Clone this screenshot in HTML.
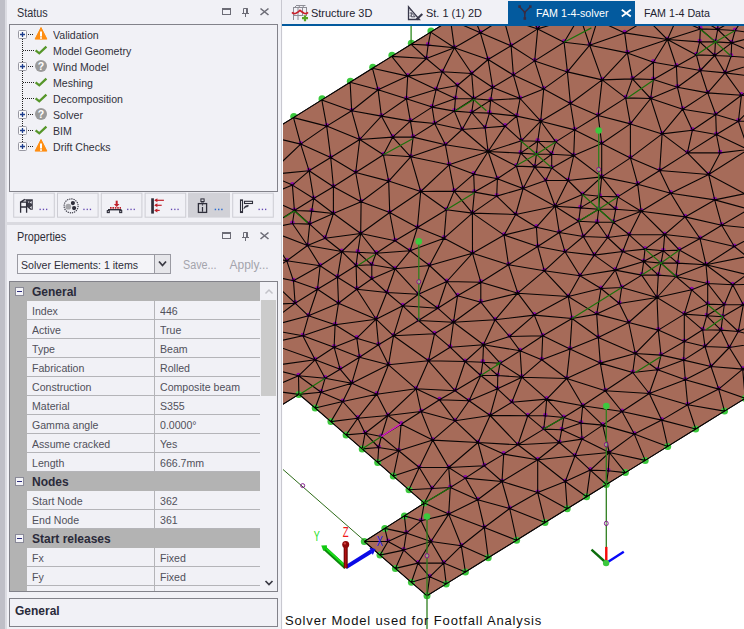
<!DOCTYPE html>
<html><head><meta charset="utf-8"><title>FAM 1-4-solver</title>
<style>
*{box-sizing:border-box;margin:0;padding:0}
html,body{width:744px;height:629px;overflow:hidden;background:#f1f1f6;font-family:"Liberation Sans",sans-serif;font-size:12px;color:#32323c}
.abs{position:absolute}
.t{display:inline-block;transform:scaleX(.92);transform-origin:0 50%;white-space:nowrap}
#strip{left:0;top:0;width:5px;height:629px;background:#bfbfc7}
#strip2{left:5px;top:0;width:2px;height:629px;background:#dcdce2}
.title{left:17px;font-size:12px;color:#2e2e38;line-height:14px;transform:scaleX(.9);transform-origin:0 50%;margin-top:.5px}
.box{border:1px solid #82828a;background:#f1f1f6}
.tree div{position:absolute;left:53px;height:16px;line-height:16px;font-size:11.5px;color:#32323c;white-space:nowrap;transform:scaleX(.92);transform-origin:0 50%;margin-top:1px}
.tb{position:absolute;top:193px;width:41px;height:25px;border:1px solid #dadae0;background:#f1f1f6}
.tb span{position:absolute;left:26px;top:6px;font-size:11px;color:#2030a0;letter-spacing:1px}
.row{position:absolute;left:27px;width:233px;height:19px;background:#f1f1f6;border-bottom:1px solid #b4b4b8}
.row i,.row b{position:absolute;top:.5px;height:18px;line-height:19px;font-style:normal;font-weight:normal;font-size:11.5px;color:#50505a;white-space:nowrap;transform:scaleX(.92);transform-origin:0 50%}
.row i{left:5px}
.row b{left:133px}
.row:after{content:"";position:absolute;left:127px;top:0;width:1px;height:18px;background:#b4b4b8}
.cat{position:absolute;left:27px;width:233px;height:19px;background:#b3b3b3;font-weight:bold;font-size:12px;line-height:21px;padding-left:5px;color:#2a2a3a}
.minus{position:absolute;left:14px;width:9px;height:9px;border:1px solid #8a8a98;background:#f4f4f8}
.minus:after{content:"";position:absolute;left:1px;top:3px;width:5px;height:1px;background:#303080}
.tab{position:absolute;top:1px;height:24px;line-height:25px;font-size:11.5px;color:#22222e;white-space:nowrap;transform:scaleX(.95);transform-origin:0 50%}
</style></head><body>
<div class="abs" id="strip"></div><div class="abs" id="strip2"></div>
<div class="abs" style="left:281px;top:0;width:1px;height:629px;background:#c8c8d0"></div>
<div class="abs" style="left:7px;top:222px;width:274px;height:3px;background:#dadae0"></div>

<!-- Status panel -->
<div class="abs title" style="top:5px">Status</div>
<svg class="abs" style="left:220px;top:5px" width="52" height="14" viewBox="0 0 52 14">
<rect x="2.5" y="3.5" width="8" height="6" fill="none" stroke="#6c6c76"/><rect x="2" y="3" width="9" height="2" fill="#6c6c76"/>
<path d="M23.5 3.500h4v5h-4zM22 8.500h7M25.500 9v3" fill="none" stroke="#6c6c76" stroke-width="1"/><rect x="26" y="3.500" width="2" height="5" fill="#6c6c76"/>
<path d="M40.500 3.500l8 6.500M48.500 3.500l-8 6.500" stroke="#6c6c76" stroke-width="1.600" fill="none"/>
</svg>
<div class="abs box" style="left:9px;top:24px;width:269px;height:168px"></div>
<div class="tree">
<div style="top:26px">Validation</div>
<div style="top:42px">Model Geometry</div>
<div style="top:58px">Wind Model</div>
<div style="top:74px">Meshing</div>
<div style="top:90px">Decomposition</div>
<div style="top:106px">Solver</div>
<div style="top:122px">BIM</div>
<div style="top:138px">Drift Checks</div>
</div>
<svg class="abs" style="left:14px;top:26px" width="40" height="130" viewBox="0 0 40 130">
<defs>
<g id="plus"><rect x="4.500" y="-4" width="8" height="8" rx="1" fill="#fafafc" stroke="#9898a2"/><path d="M6 0h5M8.500 -2.500v5" stroke="#1c3c8c" stroke-width="1.300"/><path d="M14 0h6" stroke="#222" stroke-dasharray="1 1"/></g>
<g id="dash"><path d="M9 0h11" stroke="#222" stroke-dasharray="1 1"/></g>
<g id="warn"><path d="M27 -7L32.900 4.600H21.100Z" fill="#ff8e12" stroke="#ff8e12" stroke-linejoin="round" stroke-width="1"/><path d="M27 -3v5" stroke="#fff" stroke-width="2"/><path d="M27 2.800v1.400" stroke="#fff" stroke-width="2"/></g>
<g id="chk"><path d="M21.600 -0.200l3.700 3l7.100 -6.600" fill="none" stroke="#56962a" stroke-width="2.300"/></g>
<g id="qm"><circle cx="27" cy="-0.500" r="6" fill="#9a9a9a"/><text x="27" y="3.400" font-family="Liberation Sans, sans-serif" font-weight="bold" font-size="10.500" fill="#fff" text-anchor="middle">?</text></g>
</defs>
<path d="M8.500 13v108" stroke="#222" stroke-dasharray="1 1"/>
<use href="#plus" y="8.500"/><use href="#warn" y="8.500"/>
<use href="#dash" y="24.500"/><use href="#chk" y="24.500"/>
<use href="#plus" y="40.500"/><use href="#qm" y="40.500"/>
<use href="#dash" y="56.500"/><use href="#chk" y="56.500"/>
<use href="#dash" y="72.500"/><use href="#chk" y="72.500"/>
<use href="#plus" y="88.500"/><use href="#qm" y="88.500"/>
<use href="#plus" y="104.500"/><use href="#chk" y="104.500"/>
<use href="#plus" y="120.500"/><use href="#warn" y="120.500"/>
</svg>
<!-- toolbar -->
<svg class="abs" style="left:0;top:0" width="282" height="222" viewBox="0 0 282 222">
<rect x="13.7" y="193.200" width="40.600" height="24" fill="none" stroke="#cdcdd4" stroke-width="1"/>
<rect x="39.5" y="208.7" width="1.3" height="1.4" fill="#6448b4"/><rect x="42.8" y="208.7" width="1.3" height="1.4" fill="#6448b4"/><rect x="46.0" y="208.7" width="1.3" height="1.4" fill="#6448b4"/>
<rect x="57.5" y="193.200" width="40.600" height="24" fill="none" stroke="#cdcdd4" stroke-width="1"/>
<rect x="83.3" y="208.7" width="1.3" height="1.4" fill="#6448b4"/><rect x="86.6" y="208.7" width="1.3" height="1.4" fill="#6448b4"/><rect x="89.8" y="208.7" width="1.3" height="1.4" fill="#6448b4"/>
<rect x="101.3" y="193.200" width="40.600" height="24" fill="none" stroke="#cdcdd4" stroke-width="1"/>
<rect x="127.1" y="208.7" width="1.3" height="1.4" fill="#6448b4"/><rect x="130.4" y="208.7" width="1.3" height="1.4" fill="#6448b4"/><rect x="133.6" y="208.7" width="1.3" height="1.4" fill="#6448b4"/>
<rect x="145.1" y="193.200" width="40.600" height="24" fill="none" stroke="#cdcdd4" stroke-width="1"/>
<rect x="170.9" y="208.7" width="1.3" height="1.4" fill="#6448b4"/><rect x="174.2" y="208.7" width="1.3" height="1.4" fill="#6448b4"/><rect x="177.4" y="208.7" width="1.3" height="1.4" fill="#6448b4"/>
<rect x="188" y="192.700" width="42" height="24.900" fill="#d1d1d7"/>
<rect x="214.7" y="208.7" width="1.4" height="1.5" fill="#2a6ad0"/><rect x="218.0" y="208.7" width="1.4" height="1.5" fill="#2a6ad0"/><rect x="221.2" y="208.7" width="1.4" height="1.5" fill="#2a6ad0"/>
<rect x="232.7" y="193.200" width="40.600" height="24" fill="none" stroke="#cdcdd4" stroke-width="1"/>
<rect x="258.5" y="208.7" width="1.3" height="1.4" fill="#6448b4"/><rect x="261.8" y="208.7" width="1.3" height="1.4" fill="#6448b4"/><rect x="265.0" y="208.7" width="1.3" height="1.4" fill="#6448b4"/>
<path d="M24.900 199.200H32.800V209.800H30.300L26.600 206.500V202Z" fill="#3a3a46"/>
<path d="M31.700 200.900v2.900l-2.100-1.200zM31.700 206.100v2.800l-1.900-1.400zM27.600 201.400l1.800 0.200l-0.600 1.400z" fill="#e8e8ee"/>
<g fill="none" stroke="#2e2e3a" stroke-width="1.300"><path d="M20.600 212.800V202.100H26.600V212.800M20.600 207h6M20.600 202.100L24.900 199.400"/></g>
<circle cx="71.100" cy="205.900" r="7" fill="none" stroke="#2e2e3a" stroke-width="1.100" stroke-dasharray="1.300 0.900"/><circle cx="68.300" cy="206.700" r="2.900" fill="#a6a6aa"/><circle cx="72.900" cy="203.100" r="2.100" fill="#2e2e3a"/><circle cx="74.100" cy="208.100" r="2.100" fill="#2e2e3a"/>
<path d="M108 209.700h13.500" stroke="#2e2e3a" stroke-width="1.400"/><rect x="107.300" y="210.600" width="2" height="2" fill="none" stroke="#2e2e3a" stroke-width="1.100"/><rect x="119.700" y="210.600" width="2" height="2" fill="none" stroke="#2e2e3a" stroke-width="1.100"/>
<path d="M110 207.900h11" stroke="#c0202a" stroke-width="1.900" stroke-dasharray="1.600 0.800"/><path d="M116.700 200.700v4" stroke="#c0202a" stroke-width="2"/><path d="M113.900 204h5.600l-2.800 2.900z" fill="#c0202a"/>
<rect x="151.200" y="198.300" width="2.700" height="15.300" fill="#2e2e3a"/>
<path d="M155 200.3H163.9" stroke="#c0202a" stroke-width="1.200"/><path d="M154.200 200.3l3.200-2v4z" fill="#c0202a"/>
<path d="M155 205.3H161.7" stroke="#c0202a" stroke-width="1.200"/><path d="M154.200 205.3l3.200-2v4z" fill="#c0202a"/>
<path d="M155 210.4H159.7" stroke="#c0202a" stroke-width="1.200"/><path d="M154.200 210.4l3.200-2v4z" fill="#c0202a"/>
<rect x="198.400" y="203.600" width="8.200" height="8.800" fill="none" stroke="#2e2e3a" stroke-width="1.300"/><path d="M202.500 204.300v1.300M202.500 207v4.700" stroke="#2e2e3a" stroke-width="1.200"/><rect x="200.900" y="198.900" width="3.200" height="2.600" fill="none" stroke="#2e2e3a" stroke-width="1"/><path d="M201 203h3" stroke="#2e2e3a" stroke-width="1"/>
<rect x="240.500" y="199.900" width="2" height="12.600" fill="none" stroke="#2e2e3a" stroke-width="1.100"/><rect x="244.500" y="201.300" width="8" height="2.200" fill="none" stroke="#2e2e3a" stroke-width="1.100"/><path d="M243.800 208.600q0.300-3 4.500-3.300l-0.200 1.200q-2.300 0.200-4.300 2.100z" fill="#2e2e3a" stroke="#2e2e3a" stroke-width="0.600"/>
</svg>
<!-- Properties panel -->
<div class="abs title" style="top:229px">Properties</div>
<svg class="abs" style="left:220px;top:229px" width="52" height="14" viewBox="0 0 52 14">
<rect x="2.5" y="3.5" width="8" height="6" fill="none" stroke="#6c6c76"/><rect x="2" y="3" width="9" height="2" fill="#6c6c76"/>
<path d="M23.5 3.500h4v5h-4zM22 8.500h7M25.500 9v3" fill="none" stroke="#6c6c76" stroke-width="1"/><rect x="26" y="3.500" width="2" height="5" fill="#6c6c76"/>
<path d="M40.500 3.500l8 6.500M48.500 3.500l-8 6.500" stroke="#6c6c76" stroke-width="1.600" fill="none"/>
</svg>
<div class="abs" style="left:17px;top:254px;width:154px;height:20px;border:1px solid #9a9aa2;background:#f4f4f8"></div>
<div class="abs" style="left:154px;top:254px;width:17px;height:20px;border:1px solid #9a9aa2;background:#e6e6ea"></div>
<svg class="abs" style="left:157px;top:259px" width="11" height="10"><path d="M2 2.500l3.500 4l3.500-4" fill="none" stroke="#3a3a44" stroke-width="1.800"/></svg>
<div class="abs" style="left:21px;top:257.5px;font-size:11.5px;line-height:14px;color:#2e2e38;white-space:nowrap;transform:scaleX(.92);transform-origin:0 50%">Solver Elements: 1 items</div>
<div class="abs" style="left:183px;top:257.5px;font-size:12px;line-height:14px;color:#a4a4ac;transform:scaleX(.9);transform-origin:0 50%">Save...</div>
<div class="abs" style="left:229.5px;top:257.5px;font-size:12px;line-height:14px;color:#a4a4ac">Apply...</div>

<div class="abs" style="left:9px;top:281px;width:269px;height:311px;border:1px solid #82828a;background:#b3b3b3;overflow:hidden">
<div style="position:absolute;left:0;top:0;width:268px;height:309px">
<div class="cat" style="left:17px;top:0">General</div><div class="minus" style="left:5px;top:4.500px"></div>
<div class="row" style="left:17px;top:19px"><i>Index</i><b>446</b></div>
<div class="row" style="left:17px;top:38px"><i>Active</i><b>True</b></div>
<div class="row" style="left:17px;top:57px"><i>Type</i><b>Beam</b></div>
<div class="row" style="left:17px;top:76px"><i>Fabrication</i><b>Rolled</b></div>
<div class="row" style="left:17px;top:95px"><i>Construction</i><b>Composite beam</b></div>
<div class="row" style="left:17px;top:114px"><i>Material</i><b>S355</b></div>
<div class="row" style="left:17px;top:133px"><i>Gamma angle</i><b>0.0000°</b></div>
<div class="row" style="left:17px;top:152px"><i>Assume cracked</i><b>Yes</b></div>
<div class="row" style="left:17px;top:171px"><i>Length</i><b>666.7mm</b></div>
<div class="cat" style="left:17px;top:190px">Nodes</div><div class="minus" style="left:5px;top:194.500px"></div>
<div class="row" style="left:17px;top:209px"><i>Start Node</i><b>362</b></div>
<div class="row" style="left:17px;top:228px"><i>End Node</i><b>361</b></div>
<div class="cat" style="left:17px;top:247px">Start releases</div><div class="minus" style="left:5px;top:251.500px"></div>
<div class="row" style="left:17px;top:266px"><i>Fx</i><b>Fixed</b></div>
<div class="row" style="left:17px;top:285px"><i>Fy</i><b>Fixed</b></div>
<div class="row" style="left:17px;top:304px"><i></i><b></b></div>
<!-- scrollbar -->
<div style="position:absolute;left:250px;top:0;width:18px;height:309px;background:#f1f1f6"></div>
<div style="position:absolute;left:250.5px;top:18px;width:15.5px;height:96px;background:#cbcbcb"></div>
<svg style="position:absolute;left:253px;top:5px" width="12" height="9"><path d="M2.500 6.500l3.500-3.500l3.500 3.500" fill="none" stroke="#c2c2c8" stroke-width="1.500"/></svg>
<svg style="position:absolute;left:253px;top:296px" width="12" height="9"><path d="M2.500 3l3.500 3.500l3.500-3.500" fill="none" stroke="#3a3a44" stroke-width="1.700"/></svg>
</div>
</div>
<div class="abs" style="left:9px;top:598px;width:269px;height:29px;border:1px solid #82828a;background:#f1f1f6"></div>
<div class="abs" style="left:15px;top:604px;font-weight:bold;font-size:12px;line-height:14px;color:#2a2a3a">General</div>

<!-- tab bar -->
<div class="abs" style="left:282px;top:0;width:462px;height:24px;background:#f1f1f6"></div>
<div class="abs" style="left:282px;top:24px;width:462px;height:2px;background:#035a9e"></div>
<div class="abs" style="left:508px;top:1px;width:127px;height:24px;background:#035a9e"></div>
<div class="tab" style="left:311px">Structure 3D</div>
<div class="tab" style="left:426px">St. 1 (1) 2D</div>
<div class="tab" style="left:536px;color:#fff;transform:scaleX(.93)">FAM 1-4-solver</div>
<div class="tab" style="left:644px;transform:scaleX(.93)">FAM 1-4 Data</div>
<svg class="abs" style="left:282px;top:0" width="462" height="24" viewBox="282 0 462 24">
<g stroke="#8e8e96" fill="none" stroke-width="1"><path d="M293.500 20V7.500M306.500 16V7.500M293 7.500h14M296 5.500h9.500M293.500 15.500h10M298 20v-12M302.500 16v-9M295 7l2-2M299 7l1-2M303 7l1-2"/></g>
<path d="M292 12.300q1.800 1.800 3.800 1q2.200-1 4.200-3q2 1.800 4.200 3q2 0.800 3.800-1" fill="none" stroke="#c8202a" stroke-width="1.700"/>
<path d="M305 15.200v6M302 18.200h6" stroke="#58a422" stroke-width="2.200"/>
<path d="M408.500 6.800v12.700h11z" fill="none" stroke="#38384a" stroke-width="1.300"/><path d="M411.300 12.500v4.300h3.800z" fill="none" stroke="#38384a" stroke-width="0.900"/><path d="M416.500 19.500l5.800-5.600" stroke="#38384a" stroke-width="2.100"/><path d="M409.500 10h1.500M409.500 13h1.500M409.500 16h1.500" stroke="#38384a" stroke-width="0.700"/>
<path d="M519.500 6.800l5.300 5.500l5.500-5.500M524.800 12.300v6.200" fill="none" stroke="#3a2c40" stroke-width="1.500"/><rect x="518.300" y="5.300" width="2.600" height="2.600" fill="#3a2c40"/><rect x="529" y="5.300" width="2.600" height="2.600" fill="#3a2c40"/><rect x="523.500" y="17.200" width="2.600" height="2.600" fill="#3a2c40"/><rect x="523.700" y="11.200" width="2.200" height="2.200" fill="#3a2c40"/>
<path d="M621.800 9.800l9 6.600M630.800 9.800l-9 6.600" stroke="#fff" stroke-width="1.800"/>
</svg>
<svg width="462" height="603" viewBox="0 0 462 603" style="position:absolute;left:282px;top:26px;background:#fff">
<g fill="#3cc83e"><circle cx="11.8" cy="90.6" r="3.6"/><circle cx="40.1" cy="72.9" r="3.6"/><circle cx="68.4" cy="55.3" r="3.6"/><circle cx="90.8" cy="41.3" r="3.6"/><circle cx="110" cy="29.4" r="3.6"/><circle cx="129.4" cy="17.3" r="3.6"/><circle cx="149" cy="5.1" r="3.6"/></g>
<polygon points="-82,149.8 218,-37.1 518,-85.2 518,338.3 145,569.8 82.3,515.5 142.3,477.1 17.3,368.1 -82,429.7" fill="#a66b59"/>
<g fill="#3cc83e"><circle cx="16.9" cy="368.4" r="3.5"/><circle cx="33.2" cy="382" r="3.5"/><circle cx="48.9" cy="395.6" r="3.5"/><circle cx="64.1" cy="408.9" r="3.5"/><circle cx="442.5" cy="385.1" r="3.5"/><circle cx="413.7" cy="403" r="3.5"/><circle cx="463.2" cy="372.3" r="3.5"/><circle cx="80.2" cy="422.9" r="3.5"/><circle cx="95.7" cy="436.4" r="3.5"/><circle cx="111.3" cy="450.1" r="3.5"/><circle cx="127" cy="463.8" r="3.5"/><circle cx="142.3" cy="477.1" r="3.5"/><circle cx="122.4" cy="489.9" r="3.5"/><circle cx="102.8" cy="502.4" r="3.5"/><circle cx="82.3" cy="515.5" r="3.5"/><circle cx="98" cy="529.1" r="3.5"/><circle cx="113.4" cy="542.4" r="3.5"/><circle cx="129.4" cy="556.3" r="3.5"/><circle cx="145" cy="569.8" r="3.5"/><circle cx="164.2" cy="557.9" r="3.5"/><circle cx="183.4" cy="546" r="3.5"/><circle cx="206.2" cy="531.8" r="3.5"/><circle cx="234.6" cy="514.2" r="3.5"/><circle cx="263" cy="496.5" r="3.5"/><circle cx="285.2" cy="482.8" r="3.5"/><circle cx="304.6" cy="470.7" r="3.5"/><circle cx="324.3" cy="458.5" r="3.5"/><circle cx="343.4" cy="446.6" r="3.5"/><circle cx="363.2" cy="434.4" r="3.5"/><circle cx="385.7" cy="420.4" r="3.5"/></g>
<g fill="#900cac"><circle cx="146.1" cy="18.2" r="2.2"/><circle cx="172.4" cy="20.9" r="2.2"/><circle cx="198.4" cy="5.9" r="2.2"/><circle cx="229.1" cy="18.9" r="2.2"/><circle cx="144.4" cy="31.6" r="2.2"/><circle cx="206.1" cy="32.6" r="2.2"/><circle cx="160.4" cy="44.9" r="2.2"/><circle cx="189.7" cy="46.6" r="2.2"/><circle cx="231.4" cy="48.2" r="2.2"/><circle cx="125.7" cy="49.2" r="2.2"/><circle cx="175.4" cy="58.6" r="2.2"/><circle cx="210.7" cy="60.6" r="2.2"/><circle cx="154.1" cy="62.6" r="2.2"/><circle cx="96.1" cy="62.9" r="2.2"/><circle cx="124.4" cy="71.9" r="2.2"/><circle cx="173.4" cy="71.6" r="2.2"/><circle cx="191.7" cy="71.9" r="2.2"/><circle cx="208.7" cy="73.2" r="2.2"/><circle cx="238.1" cy="71.6" r="2.2"/><circle cx="69.7" cy="83.9" r="2.2"/><circle cx="150.1" cy="80.2" r="2.2"/><circle cx="172.4" cy="84.2" r="2.2"/><circle cx="189.7" cy="85.6" r="2.2"/><circle cx="207.4" cy="86.2" r="2.2"/><circle cx="234.7" cy="89.2" r="2.2"/><circle cx="99.4" cy="89.2" r="2.2"/><circle cx="128.4" cy="94.2" r="2.2"/><circle cx="152.7" cy="96.6" r="2.2"/><circle cx="180.1" cy="102.6" r="2.2"/><circle cx="203.1" cy="100.9" r="2.2"/><circle cx="223.1" cy="99.2" r="2.2"/><circle cx="44.7" cy="99.2" r="2.2"/><circle cx="77.7" cy="112.6" r="2.2"/><circle cx="110.7" cy="110.2" r="2.2"/><circle cx="131.1" cy="110.2" r="2.2"/><circle cx="163.4" cy="117.9" r="2.2"/><circle cx="239.4" cy="113.9" r="2.2"/><circle cx="18.7" cy="117.2" r="2.2"/><circle cx="101.4" cy="127.9" r="2.2"/><circle cx="128.7" cy="129.9" r="2.2"/><circle cx="206.1" cy="124.6" r="2.2"/><circle cx="238.7" cy="126.2" r="2.2"/><circle cx="48.7" cy="130.6" r="2.2"/><circle cx="167.1" cy="137.9" r="2.2"/><circle cx="234.4" cy="139.2" r="2.2"/><circle cx="27.1" cy="143.9" r="2.2"/><circle cx="73.7" cy="145.6" r="2.2"/><circle cx="106.7" cy="154.2" r="2.2"/><circle cx="191.7" cy="147.2" r="2.2"/><circle cx="215.4" cy="151.9" r="2.2"/><circle cx="10.4" cy="158.2" r="2.2"/><circle cx="51.4" cy="159.9" r="2.2"/><circle cx="138.7" cy="164.6" r="2.2"/><circle cx="172.1" cy="164.2" r="2.2"/><circle cx="192.4" cy="165.2" r="2.2"/><circle cx="214.7" cy="169.2" r="2.2"/><circle cx="241.1" cy="161.6" r="2.2"/><circle cx="31.7" cy="171.6" r="2.2"/><circle cx="79.1" cy="174.9" r="2.2"/><circle cx="107.7" cy="185.6" r="2.2"/><circle cx="164.4" cy="182.9" r="2.2"/><circle cx="190.4" cy="186.2" r="2.2"/><circle cx="12.4" cy="183.6" r="2.2"/><circle cx="29.7" cy="184.2" r="2.2"/><circle cx="51.4" cy="186.6" r="2.2"/><circle cx="233.7" cy="187.6" r="2.2"/><circle cx="10.4" cy="196.6" r="2.2"/><circle cx="27.7" cy="197.2" r="2.2"/><circle cx="78.7" cy="206.6" r="2.2"/><circle cx="135.4" cy="200.6" r="2.2"/><circle cx="222.1" cy="208.2" r="2.2"/><circle cx="255.7" cy="2" r="2.2"/><circle cx="282.1" cy="15.3" r="2.2"/><circle cx="307.7" cy="18.3" r="2.2"/><circle cx="342.7" cy="6" r="2.2"/><circle cx="385.4" cy="12.6" r="2.2"/><circle cx="418.4" cy="2" r="2.2"/><circle cx="435.7" cy="2.6" r="2.2"/><circle cx="453.1" cy="3.6" r="2.2"/><circle cx="417.7" cy="15" r="2.2"/><circle cx="433.4" cy="15" r="2.2"/><circle cx="449.7" cy="16" r="2.2"/><circle cx="414.4" cy="28" r="2.2"/><circle cx="432.7" cy="28.6" r="2.2"/><circle cx="449.1" cy="29.3" r="2.2"/><circle cx="252.7" cy="34" r="2.2"/><circle cx="345.4" cy="26" r="2.2"/><circle cx="371.4" cy="35.3" r="2.2"/><circle cx="394.4" cy="39.3" r="2.2"/><circle cx="418.4" cy="43.6" r="2.2"/><circle cx="443.1" cy="46" r="2.2"/><circle cx="285.4" cy="45" r="2.2"/><circle cx="320.1" cy="53" r="2.2"/><circle cx="350.4" cy="52" r="2.2"/><circle cx="371.4" cy="52.6" r="2.2"/><circle cx="395.4" cy="60.3" r="2.2"/><circle cx="425.7" cy="66" r="2.2"/><circle cx="459.4" cy="68.3" r="2.2"/><circle cx="261.7" cy="62" r="2.2"/><circle cx="288.4" cy="76.6" r="2.2"/><circle cx="343.7" cy="71" r="2.2"/><circle cx="368.7" cy="71.6" r="2.2"/><circle cx="400.7" cy="82.3" r="2.2"/><circle cx="433.7" cy="87.6" r="2.2"/><circle cx="456.4" cy="94.3" r="2.2"/><circle cx="258.7" cy="94.3" r="2.2"/><circle cx="316.1" cy="88.6" r="2.2"/><circle cx="348.4" cy="97" r="2.2"/><circle cx="380.1" cy="107" r="2.2"/><circle cx="410.4" cy="103.3" r="2.2"/><circle cx="434.4" cy="107.6" r="2.2"/><circle cx="292.7" cy="103" r="2.2"/><circle cx="319.7" cy="116.6" r="2.2"/><circle cx="255.7" cy="114.3" r="2.2"/><circle cx="273.7" cy="115" r="2.2"/><circle cx="254.4" cy="127.3" r="2.2"/><circle cx="269.7" cy="127.3" r="2.2"/><circle cx="291.7" cy="128.6" r="2.2"/><circle cx="348.4" cy="131" r="2.2"/><circle cx="405.4" cy="126" r="2.2"/><circle cx="438.1" cy="126" r="2.2"/><circle cx="252.7" cy="140" r="2.2"/><circle cx="269.7" cy="141" r="2.2"/><circle cx="377.7" cy="143.6" r="2.2"/><circle cx="426.7" cy="147.6" r="2.2"/><circle cx="263.7" cy="153.6" r="2.2"/><circle cx="286.1" cy="153.6" r="2.2"/><circle cx="319.7" cy="150" r="2.2"/><circle cx="355.7" cy="157.3" r="2.2"/><circle cx="388.7" cy="166.3" r="2.2"/><circle cx="432.7" cy="173" r="2.2"/><circle cx="300.4" cy="167.6" r="2.2"/><circle cx="317.7" cy="169.3" r="2.2"/><circle cx="335.7" cy="170" r="2.2"/><circle cx="273.1" cy="179.3" r="2.2"/><circle cx="298.4" cy="181" r="2.2"/><circle cx="316.7" cy="182.3" r="2.2"/><circle cx="333.7" cy="182.3" r="2.2"/><circle cx="359.1" cy="184.3" r="2.2"/><circle cx="403.1" cy="190" r="2.2"/><circle cx="439.7" cy="198.3" r="2.2"/><circle cx="296.7" cy="194.3" r="2.2"/><circle cx="315.1" cy="195.3" r="2.2"/><circle cx="331.4" cy="195.3" r="2.2"/><circle cx="254.4" cy="200.3" r="2.2"/><circle cx="382.7" cy="207.6" r="2.2"/><circle cx="43.1" cy="211.3" r="2.2"/><circle cx="113.1" cy="213.9" r="2.2"/><circle cx="162.1" cy="211.3" r="2.2"/><circle cx="25.5" cy="218.6" r="2.2"/><circle cx="59.8" cy="224.6" r="2.2"/><circle cx="75.8" cy="225.3" r="2.2"/><circle cx="94.1" cy="226.3" r="2.2"/><circle cx="128.1" cy="223.9" r="2.2"/><circle cx="190.5" cy="226.3" r="2.2"/><circle cx="4.8" cy="233.9" r="2.2"/><circle cx="38.1" cy="238.9" r="2.2"/><circle cx="74.1" cy="238.6" r="2.2"/><circle cx="89.8" cy="237.9" r="2.2"/><circle cx="113.1" cy="241.9" r="2.2"/><circle cx="147.5" cy="238.6" r="2.2"/><circle cx="226.5" cy="237.9" r="2.2"/><circle cx="11.5" cy="253.9" r="2.2"/><circle cx="55.5" cy="250.3" r="2.2"/><circle cx="89.8" cy="251.9" r="2.2"/><circle cx="164.8" cy="254.6" r="2.2"/><circle cx="198.8" cy="255.3" r="2.2"/><circle cx="35.5" cy="262.3" r="2.2"/><circle cx="74.8" cy="262.3" r="2.2"/><circle cx="104.8" cy="265.6" r="2.2"/><circle cx="136.5" cy="267.3" r="2.2"/><circle cx="175.5" cy="268.9" r="2.2"/><circle cx="235.8" cy="266.3" r="2.2"/><circle cx="13.1" cy="276.3" r="2.2"/><circle cx="56.5" cy="276.3" r="2.2"/><circle cx="120.8" cy="278.9" r="2.2"/><circle cx="155.8" cy="281.3" r="2.2"/><circle cx="198.8" cy="275.3" r="2.2"/><circle cx="26.5" cy="288.9" r="2.2"/><circle cx="94.1" cy="292.3" r="2.2"/><circle cx="136.5" cy="293.6" r="2.2"/><circle cx="171.5" cy="295.3" r="2.2"/><circle cx="213.1" cy="292.9" r="2.2"/><circle cx="53.1" cy="297.9" r="2.2"/><circle cx="20.8" cy="308.9" r="2.2"/><circle cx="74.8" cy="311.3" r="2.2"/><circle cx="111.5" cy="308.9" r="2.2"/><circle cx="152.5" cy="306.9" r="2.2"/><circle cx="227.5" cy="309.6" r="2.2"/><circle cx="52.1" cy="320.3" r="2.2"/><circle cx="96.5" cy="317.9" r="2.2"/><circle cx="168.1" cy="320.3" r="2.2"/><circle cx="201.5" cy="317.9" r="2.2"/><circle cx="238.1" cy="323.9" r="2.2"/><circle cx="33.1" cy="332.9" r="2.2"/><circle cx="77.5" cy="330.3" r="2.2"/><circle cx="106.5" cy="337.9" r="2.2"/><circle cx="146.5" cy="333.9" r="2.2"/><circle cx="183.1" cy="334.6" r="2.2"/><circle cx="200.8" cy="335.3" r="2.2"/><circle cx="218.1" cy="336.3" r="2.2"/><circle cx="16.5" cy="348.9" r="2.2"/><circle cx="43.1" cy="351.3" r="2.2"/><circle cx="58.1" cy="342.3" r="2.2"/><circle cx="69.8" cy="356.3" r="2.2"/><circle cx="198.8" cy="348.6" r="2.2"/><circle cx="215.8" cy="348.6" r="2.2"/><circle cx="239.8" cy="350.3" r="2.2"/><circle cx="39.1" cy="365.3" r="2.2"/><circle cx="94.8" cy="367.3" r="2.2"/><circle cx="134.1" cy="361.9" r="2.2"/><circle cx="173.1" cy="363.9" r="2.2"/><circle cx="215.5" cy="361.9" r="2.2"/><circle cx="60.8" cy="374.6" r="2.2"/><circle cx="157.5" cy="372.9" r="2.2"/><circle cx="187.1" cy="373.9" r="2.2"/><circle cx="229.8" cy="375.3" r="2.2"/><circle cx="75.8" cy="391.3" r="2.2"/><circle cx="105.8" cy="388.6" r="2.2"/><circle cx="139.1" cy="384.6" r="2.2"/><circle cx="173.1" cy="393.9" r="2.2"/><circle cx="208.1" cy="388.6" r="2.2"/><circle cx="245.8" cy="388.9" r="2.2"/><circle cx="119.1" cy="397.3" r="2.2"/><circle cx="83.1" cy="406.3" r="2.2"/><circle cx="277.3" cy="205.6" r="2.2"/><circle cx="301.3" cy="209.6" r="2.2"/><circle cx="325.7" cy="210.6" r="2.2"/><circle cx="347.3" cy="207.9" r="2.2"/><circle cx="418" cy="211.6" r="2.2"/><circle cx="452.3" cy="219.6" r="2.2"/><circle cx="255.7" cy="219.6" r="2.2"/><circle cx="283" cy="224.9" r="2.2"/><circle cx="312.3" cy="228.2" r="2.2"/><circle cx="340.7" cy="224.6" r="2.2"/><circle cx="363" cy="222.2" r="2.2"/><circle cx="381.3" cy="223.9" r="2.2"/><circle cx="397.3" cy="223.2" r="2.2"/><circle cx="262.3" cy="243.9" r="2.2"/><circle cx="298" cy="248.9" r="2.2"/><circle cx="333.3" cy="243.2" r="2.2"/><circle cx="361.7" cy="234.6" r="2.2"/><circle cx="379" cy="236.2" r="2.2"/><circle cx="395.7" cy="236.2" r="2.2"/><circle cx="424" cy="237.9" r="2.2"/><circle cx="359.7" cy="248.2" r="2.2"/><circle cx="376.3" cy="248.2" r="2.2"/><circle cx="394" cy="249.6" r="2.2"/><circle cx="425.7" cy="256.6" r="2.2"/><circle cx="450.7" cy="257.9" r="2.2"/><circle cx="286.3" cy="269.6" r="2.2"/><circle cx="319" cy="261.6" r="2.2"/><circle cx="339.7" cy="260.6" r="2.2"/><circle cx="375" cy="270.6" r="2.2"/><circle cx="409.7" cy="262.9" r="2.2"/><circle cx="337.3" cy="276.6" r="2.2"/><circle cx="425.7" cy="277.2" r="2.2"/><circle cx="442.3" cy="277.9" r="2.2"/><circle cx="461.3" cy="277.9" r="2.2"/><circle cx="252.3" cy="288.2" r="2.2"/><circle cx="290" cy="291.6" r="2.2"/><circle cx="314.7" cy="287.2" r="2.2"/><circle cx="346.7" cy="295.6" r="2.2"/><circle cx="402.3" cy="287.2" r="2.2"/><circle cx="424.7" cy="288.9" r="2.2"/><circle cx="440.7" cy="289.9" r="2.2"/><circle cx="260.7" cy="308.9" r="2.2"/><circle cx="316.3" cy="310.6" r="2.2"/><circle cx="376.3" cy="303.2" r="2.2"/><circle cx="420.7" cy="302.9" r="2.2"/><circle cx="439" cy="303.2" r="2.2"/><circle cx="456.3" cy="304.6" r="2.2"/><circle cx="288" cy="322.2" r="2.2"/><circle cx="353.3" cy="326.6" r="2.2"/><circle cx="402.3" cy="314.6" r="2.2"/><circle cx="423" cy="319.6" r="2.2"/><circle cx="447.3" cy="320.6" r="2.2"/><circle cx="259.7" cy="332.9" r="2.2"/><circle cx="318.3" cy="336.2" r="2.2"/><circle cx="379" cy="328.2" r="2.2"/><circle cx="401.7" cy="333.2" r="2.2"/><circle cx="429" cy="339.6" r="2.2"/><circle cx="460.7" cy="342.2" r="2.2"/><circle cx="350.7" cy="345.6" r="2.2"/><circle cx="375.7" cy="342.9" r="2.2"/><circle cx="284.7" cy="351.6" r="2.2"/><circle cx="323.3" cy="363.9" r="2.2"/><circle cx="367.3" cy="366.6" r="2.2"/><circle cx="403.3" cy="352.9" r="2.2"/><circle cx="436.7" cy="362.2" r="2.2"/><circle cx="264.7" cy="372.2" r="2.2"/><circle cx="300.7" cy="378.9" r="2.2"/><circle cx="340" cy="384.6" r="2.2"/><circle cx="405.7" cy="377.9" r="2.2"/><circle cx="263.3" cy="388.9" r="2.2"/><circle cx="281.7" cy="390.6" r="2.2"/><circle cx="299" cy="396.2" r="2.2"/><circle cx="320.7" cy="398.2" r="2.2"/><circle cx="379.7" cy="393.2" r="2.2"/><circle cx="261.7" cy="402.2" r="2.2"/><circle cx="279.7" cy="402.9" r="2.2"/><circle cx="352.3" cy="407.2" r="2.2"/><circle cx="99.3" cy="409.6" r="2.2"/><circle cx="150.7" cy="413.2" r="2.2"/><circle cx="196" cy="415.6" r="2.2"/><circle cx="236" cy="417.9" r="2.2"/><circle cx="96.7" cy="420.6" r="2.2"/><circle cx="116.7" cy="423.9" r="2.2"/><circle cx="221.7" cy="427.2" r="2.2"/><circle cx="137.3" cy="440.6" r="2.2"/><circle cx="166.7" cy="440.6" r="2.2"/><circle cx="202.3" cy="438.9" r="2.2"/><circle cx="183.3" cy="451.2" r="2.2"/><circle cx="220" cy="454.6" r="2.2"/><circle cx="150" cy="461.6" r="2.2"/><circle cx="168.3" cy="460.6" r="2.2"/><circle cx="195.7" cy="472.9" r="2.2"/><circle cx="227.7" cy="481.6" r="2.2"/><circle cx="139" cy="493.9" r="2.2"/><circle cx="166.7" cy="487.2" r="2.2"/><circle cx="124.3" cy="506.2" r="2.2"/><circle cx="202.3" cy="500.6" r="2.2"/><circle cx="106" cy="514.6" r="2.2"/><circle cx="149" cy="514.6" r="2.2"/><circle cx="121.7" cy="523.2" r="2.2"/><circle cx="179.3" cy="518.9" r="2.2"/><circle cx="136" cy="536.2" r="2.2"/><circle cx="161.7" cy="536.2" r="2.2"/><circle cx="147.7" cy="549.9" r="2.2"/><circle cx="277.3" cy="415.6" r="2.2"/><circle cx="300" cy="412.2" r="2.2"/><circle cx="327.3" cy="425.6" r="2.2"/><circle cx="255.7" cy="432.9" r="2.2"/><circle cx="293" cy="428.9" r="2.2"/><circle cx="308.3" cy="443.2" r="2.2"/><circle cx="326.3" cy="443.9" r="2.2"/><circle cx="283.3" cy="454.6" r="2.2"/><circle cx="255.7" cy="465.6" r="2.2"/></g>
<path d="M146.1 19.1L172.4 21.8M146.1 19.1L144.4 32.5M146.1 19.1L129.1 18.3M146.1 19.1L148.7 6.1M172.4 21.8L198.4 6.8M172.4 21.8L144.4 32.5M172.4 21.8L206.1 33.5M172.4 21.8L160.4 45.8M172.4 21.8L189.7 47.5M172.4 21.8L148.7 6.1M172.4 21.8L168.5 -6.2M198.4 6.8L229.1 19.8M198.4 6.8L206.1 33.5M198.4 6.8L168.5 -6.2M198.4 6.8L188 -18.4M198.4 6.8L221.6 -8.1M229.1 19.8L206.1 33.5M229.1 19.8L231.4 49.1M229.1 19.8L255.7 2.9M229.1 19.8L252.7 34.9M229.1 19.8L221.6 -8.1M144.4 32.5L160.4 45.8M144.4 32.5L125.7 50.1M144.4 32.5L109.7 30.4M144.4 32.5L129.1 18.3M206.1 33.5L189.7 47.5M206.1 33.5L231.4 49.1M206.1 33.5L210.7 61.5M160.4 45.8L189.7 47.5M160.4 45.8L125.7 50.1M160.4 45.8L175.4 59.5M160.4 45.8L154.1 63.5M189.7 47.5L175.4 59.5M189.7 47.5L210.7 61.5M189.7 47.5L191.7 72.8M231.4 49.1L210.7 61.5M231.4 49.1L238.1 72.5M231.4 49.1L252.7 34.9M231.4 49.1L261.7 62.9M125.7 50.1L154.1 63.5M125.7 50.1L96.1 63.8M125.7 50.1L124.4 72.8M125.7 50.1L90.5 42.3M125.7 50.1L109.7 30.4M175.4 59.5L154.1 63.5M175.4 59.5L173.4 72.5M175.4 59.5L191.7 72.8M210.7 61.5L191.7 72.8M210.7 61.5L208.7 74.1M210.7 61.5L238.1 72.5M154.1 63.5L124.4 72.8M154.1 63.5L173.4 72.5M154.1 63.5L150.1 81.1M96.1 63.8L124.4 72.8M96.1 63.8L69.7 84.8M96.1 63.8L99.4 90.1M96.1 63.8L68.1 56.3M96.1 63.8L90.5 42.3M124.4 72.8L150.1 81.1M124.4 72.8L99.4 90.1M124.4 72.8L128.4 95.1M173.4 72.5L191.7 72.8M173.4 72.5L150.1 81.1M173.4 72.5L172.4 85.1M191.7 72.8L208.7 74.1M191.7 72.8L172.4 85.1M191.7 72.8L189.7 86.5M208.7 74.1L238.1 72.5M208.7 74.1L189.7 86.5M208.7 74.1L207.4 87.1M208.7 74.1L234.7 90.1M238.1 72.5L234.7 90.1M238.1 72.5L261.7 62.9M238.1 72.5L258.7 95.2M69.7 84.8L99.4 90.1M69.7 84.8L44.7 100.1M69.7 84.8L77.7 113.5M69.7 84.8L39.8 73.9M69.7 84.8L68.1 56.3M150.1 81.1L172.4 85.1M150.1 81.1L128.4 95.1M150.1 81.1L152.7 97.5M172.4 85.1L189.7 86.5M172.4 85.1L152.7 97.5M172.4 85.1L180.1 103.5M189.7 86.5L207.4 87.1M189.7 86.5L180.1 103.5M189.7 86.5L203.1 101.8M207.4 87.1L234.7 90.1M207.4 87.1L203.1 101.8M207.4 87.1L223.1 100.1M234.7 90.1L223.1 100.1M234.7 90.1L239.4 114.8M234.7 90.1L258.7 95.2M99.4 90.1L128.4 95.1M99.4 90.1L77.7 113.5M99.4 90.1L110.7 111.1M128.4 95.1L152.7 97.5M128.4 95.1L110.7 111.1M128.4 95.1L131.1 111.1M152.7 97.5L180.1 103.5M152.7 97.5L131.1 111.1M152.7 97.5L163.4 118.8M180.1 103.5L203.1 101.8M180.1 103.5L163.4 118.8M180.1 103.5L206.1 125.5M203.1 101.8L223.1 100.1M203.1 101.8L206.1 125.5M223.1 100.1L239.4 114.8M223.1 100.1L206.1 125.5M44.7 100.1L77.7 113.5M44.7 100.1L18.7 118.1M44.7 100.1L48.7 131.5M44.7 100.1L11.5 91.6M44.7 100.1L39.8 73.9M77.7 113.5L110.7 111.1M77.7 113.5L101.4 128.8M77.7 113.5L48.7 131.5M77.7 113.5L73.7 146.5M110.7 111.1L131.1 111.1M110.7 111.1L101.4 128.8M110.7 111.1L128.7 130.8M131.1 111.1L163.4 118.8M131.1 111.1L128.7 130.8M163.4 118.8L128.7 130.8M163.4 118.8L206.1 125.5M163.4 118.8L167.1 138.8M239.4 114.8L206.1 125.5M239.4 114.8L238.7 127.1M239.4 114.8L258.7 95.2M239.4 114.8L255.7 115.2M18.7 118.1L48.7 131.5M18.7 118.1L27.1 144.8M18.7 118.1L11.5 91.6M18.7 118.1L-17.4 109.5M18.7 118.1L-13.4 148.6M101.4 128.8L128.7 130.8M101.4 128.8L73.7 146.5M101.4 128.8L106.7 155.1M128.7 130.8L167.1 138.8M128.7 130.8L106.7 155.1M128.7 130.8L138.7 165.5M206.1 125.5L238.7 127.1M206.1 125.5L167.1 138.8M206.1 125.5L234.4 140.1M206.1 125.5L191.7 148.1M206.1 125.5L215.4 152.8M238.7 127.1L234.4 140.1M238.7 127.1L255.7 115.2M238.7 127.1L254.4 128.2M238.7 127.1L252.7 140.9M48.7 131.5L27.1 144.8M48.7 131.5L73.7 146.5M48.7 131.5L51.4 160.8M167.1 138.8L191.7 148.1M167.1 138.8L138.7 165.5M167.1 138.8L172.1 165.1M234.4 140.1L215.4 152.8M234.4 140.1L241.1 162.5M234.4 140.1L252.7 140.9M27.1 144.8L10.4 159.1M27.1 144.8L51.4 160.8M27.1 144.8L31.7 172.5M27.1 144.8L-13.4 148.6M73.7 146.5L106.7 155.1M73.7 146.5L51.4 160.8M73.7 146.5L79.1 175.8M106.7 155.1L138.7 165.5M106.7 155.1L79.1 175.8M106.7 155.1L107.7 186.5M191.7 148.1L215.4 152.8M191.7 148.1L172.1 165.1M191.7 148.1L192.4 166.1M215.4 152.8L192.4 166.1M215.4 152.8L214.7 170.1M215.4 152.8L241.1 162.5M10.4 159.1L31.7 172.5M10.4 159.1L12.4 184.5M10.4 159.1L-13.4 148.6M10.4 159.1L-17.9 170.8M51.4 160.8L31.7 172.5M51.4 160.8L79.1 175.8M51.4 160.8L51.4 187.5M138.7 165.5L172.1 165.1M138.7 165.5L107.7 186.5M138.7 165.5L164.4 183.8M138.7 165.5L135.4 201.5M172.1 165.1L192.4 166.1M172.1 165.1L164.4 183.8M172.1 165.1L190.4 187.1M192.4 166.1L214.7 170.1M192.4 166.1L190.4 187.1M214.7 170.1L241.1 162.5M214.7 170.1L190.4 187.1M214.7 170.1L233.7 188.5M241.1 162.5L233.7 188.5M241.1 162.5L252.7 140.9M241.1 162.5L263.7 154.5M241.1 162.5L273.1 180.2M31.7 172.5L12.4 184.5M31.7 172.5L29.7 185.1M31.7 172.5L51.4 187.5M79.1 175.8L107.7 186.5M79.1 175.8L51.4 187.5M79.1 175.8L78.7 207.5M107.7 186.5L78.7 207.5M107.7 186.5L135.4 201.5M107.7 186.5L113.1 214.8M164.4 183.8L190.4 187.1M164.4 183.8L135.4 201.5M164.4 183.8L162.1 212.2M190.4 187.1L233.7 188.5M190.4 187.1L222.1 209.1M190.4 187.1L162.1 212.2M190.4 187.1L190.5 227.2M12.4 184.5L29.7 185.1M12.4 184.5L10.4 197.5M12.4 184.5L27.7 198.1M12.4 184.5L-17.9 170.8M12.4 184.5L-16.8 203.2M29.7 185.1L51.4 187.5M29.7 185.1L27.7 198.1M51.4 187.5L27.7 198.1M51.4 187.5L78.7 207.5M51.4 187.5L43.1 212.2M233.7 188.5L222.1 209.1M233.7 188.5L273.1 180.2M233.7 188.5L254.4 201.2M10.4 197.5L27.7 198.1M10.4 197.5L25.5 219.5M10.4 197.5L-16.8 203.2M27.7 198.1L43.1 212.2M27.7 198.1L25.5 219.5M78.7 207.5L43.1 212.2M78.7 207.5L113.1 214.8M78.7 207.5L59.8 225.5M78.7 207.5L75.8 226.2M78.7 207.5L94.1 227.2M135.4 201.5L113.1 214.8M135.4 201.5L162.1 212.2M135.4 201.5L128.1 224.8M222.1 209.1L254.4 201.2M222.1 209.1L190.5 227.2M222.1 209.1L226.5 238.8M222.1 209.1L255.7 220.5M255.7 2.9L282.1 16.2M255.7 2.9L252.7 34.9M255.7 2.9L221.6 -8.1M255.7 2.9L246.5 -11.6M255.7 2.9L275.8 -28.7M255.7 2.9L297.8 -10M282.1 16.2L307.7 19.2M282.1 16.2L252.7 34.9M282.1 16.2L285.4 45.9M282.1 16.2L297.8 -10M307.7 19.2L342.7 6.9M307.7 19.2L345.4 26.9M307.7 19.2L285.4 45.9M307.7 19.2L320.1 53.9M307.7 19.2L297.8 -10M307.7 19.2L315.4 -5.7M342.7 6.9L385.4 13.5M342.7 6.9L345.4 26.9M342.7 6.9L315.4 -5.7M342.7 6.9L365.2 -6.8M385.4 13.5L418.4 2.9M385.4 13.5L417.7 15.9M385.4 13.5L414.4 28.9M385.4 13.5L345.4 26.9M385.4 13.5L371.4 36.2M385.4 13.5L394.4 40.2M385.4 13.5L365.2 -6.8M385.4 13.5L394.7 -7.3M418.4 2.9L435.7 3.5M418.4 2.9L417.7 15.9M418.4 2.9L433.4 15.9M418.4 2.9L394.7 -7.3M418.4 2.9L410.6 -11.9M435.7 3.5L453.1 4.5M435.7 3.5L433.4 15.9M435.7 3.5L449.7 16.9M435.7 3.5L410.6 -11.9M435.7 3.5L437.7 -32.4M435.7 3.5L465.7 -14.1M453.1 4.5L449.7 16.9M453.1 4.5L465.7 -14.1M453.1 4.5L481.2 8.6M417.7 15.9L433.4 15.9M417.7 15.9L414.4 28.9M417.7 15.9L432.7 29.5M433.4 15.9L449.7 16.9M433.4 15.9L432.7 29.5M449.7 16.9L432.7 29.5M449.7 16.9L449.1 30.2M449.7 16.9L481.2 8.6M449.7 16.9L486.9 33.3M414.4 28.9L432.7 29.5M414.4 28.9L394.4 40.2M414.4 28.9L418.4 44.5M432.7 29.5L449.1 30.2M432.7 29.5L418.4 44.5M432.7 29.5L443.1 46.9M449.1 30.2L443.1 46.9M449.1 30.2L486.9 33.3M252.7 34.9L285.4 45.9M252.7 34.9L261.7 62.9M345.4 26.9L371.4 36.2M345.4 26.9L320.1 53.9M345.4 26.9L350.4 52.9M371.4 36.2L394.4 40.2M371.4 36.2L350.4 52.9M371.4 36.2L371.4 53.5M394.4 40.2L418.4 44.5M394.4 40.2L371.4 53.5M394.4 40.2L395.4 61.2M418.4 44.5L443.1 46.9M418.4 44.5L395.4 61.2M418.4 44.5L425.7 66.9M443.1 46.9L425.7 66.9M443.1 46.9L459.4 69.2M443.1 46.9L486.9 33.3M443.1 46.9L487.2 52.3M285.4 45.9L320.1 53.9M285.4 45.9L261.7 62.9M285.4 45.9L288.4 77.5M320.1 53.9L350.4 52.9M320.1 53.9L288.4 77.5M320.1 53.9L343.7 71.9M320.1 53.9L316.1 89.5M350.4 52.9L371.4 53.5M350.4 52.9L343.7 71.9M350.4 52.9L368.7 72.5M371.4 53.5L395.4 61.2M371.4 53.5L368.7 72.5M395.4 61.2L425.7 66.9M395.4 61.2L368.7 72.5M395.4 61.2L400.7 83.2M425.7 66.9L459.4 69.2M425.7 66.9L400.7 83.2M425.7 66.9L433.7 88.5M459.4 69.2L433.7 88.5M459.4 69.2L456.4 95.2M459.4 69.2L487.2 52.3M459.4 69.2L480.3 71.1M261.7 62.9L288.4 77.5M261.7 62.9L258.7 95.2M288.4 77.5L258.7 95.2M288.4 77.5L316.1 89.5M288.4 77.5L292.7 103.9M343.7 71.9L368.7 72.5M343.7 71.9L316.1 89.5M343.7 71.9L348.4 97.9M368.7 72.5L400.7 83.2M368.7 72.5L348.4 97.9M368.7 72.5L380.1 107.9M400.7 83.2L433.7 88.5M400.7 83.2L380.1 107.9M400.7 83.2L410.4 104.2M433.7 88.5L456.4 95.2M433.7 88.5L410.4 104.2M433.7 88.5L434.4 108.5M456.4 95.2L434.4 108.5M456.4 95.2L466.2 123.5M456.4 95.2L480.3 71.1M456.4 95.2L484.1 95.2M258.7 95.2L292.7 103.9M258.7 95.2L255.7 115.2M258.7 95.2L273.7 115.9M316.1 89.5L348.4 97.9M316.1 89.5L292.7 103.9M316.1 89.5L319.7 117.5M348.4 97.9L380.1 107.9M348.4 97.9L319.7 117.5M348.4 97.9L348.4 131.9M380.1 107.9L410.4 104.2M380.1 107.9L348.4 131.9M380.1 107.9L405.4 126.9M380.1 107.9L377.7 144.5M410.4 104.2L434.4 108.5M410.4 104.2L405.4 126.9M434.4 108.5L405.4 126.9M434.4 108.5L438.1 126.9M434.4 108.5L466.2 123.5M292.7 103.9L319.7 117.5M292.7 103.9L273.7 115.9M292.7 103.9L291.7 129.5M319.7 117.5L291.7 129.5M319.7 117.5L348.4 131.9M319.7 117.5L319.7 150.9M255.7 115.2L273.7 115.9M255.7 115.2L254.4 128.2M255.7 115.2L269.7 128.2M273.7 115.9L269.7 128.2M273.7 115.9L291.7 129.5M254.4 128.2L269.7 128.2M254.4 128.2L252.7 140.9M269.7 128.2L291.7 129.5M269.7 128.2L252.7 140.9M269.7 128.2L269.7 141.9M291.7 129.5L269.7 141.9M291.7 129.5L286.1 154.5M291.7 129.5L319.7 150.9M348.4 131.9L377.7 144.5M348.4 131.9L319.7 150.9M348.4 131.9L355.7 158.2M405.4 126.9L438.1 126.9M405.4 126.9L377.7 144.5M405.4 126.9L426.7 148.5M438.1 126.9L426.7 148.5M438.1 126.9L466.2 123.5M252.7 140.9L269.7 141.9M252.7 140.9L263.7 154.5M269.7 141.9L263.7 154.5M269.7 141.9L286.1 154.5M377.7 144.5L426.7 148.5M377.7 144.5L355.7 158.2M377.7 144.5L388.7 167.2M426.7 148.5L388.7 167.2M426.7 148.5L432.7 173.9M426.7 148.5L466.2 123.5M426.7 148.5L462.7 167.7M263.7 154.5L286.1 154.5M263.7 154.5L273.1 180.2M286.1 154.5L319.7 150.9M286.1 154.5L300.4 168.5M286.1 154.5L273.1 180.2M319.7 150.9L355.7 158.2M319.7 150.9L300.4 168.5M319.7 150.9L317.7 170.2M319.7 150.9L335.7 170.9M355.7 158.2L388.7 167.2M355.7 158.2L335.7 170.9M355.7 158.2L359.1 185.2M388.7 167.2L432.7 173.9M388.7 167.2L359.1 185.2M388.7 167.2L403.1 190.9M432.7 173.9L403.1 190.9M432.7 173.9L439.7 199.2M432.7 173.9L462.7 167.7M432.7 173.9L467.1 183.2M300.4 168.5L317.7 170.2M300.4 168.5L273.1 180.2M300.4 168.5L298.4 181.9M317.7 170.2L335.7 170.9M317.7 170.2L298.4 181.9M317.7 170.2L316.7 183.2M317.7 170.2L333.7 183.2M335.7 170.9L333.7 183.2M335.7 170.9L359.1 185.2M273.1 180.2L298.4 181.9M273.1 180.2L296.7 195.2M273.1 180.2L254.4 201.2M273.1 180.2L277.3 206.5M298.4 181.9L316.7 183.2M298.4 181.9L296.7 195.2M316.7 183.2L333.7 183.2M316.7 183.2L296.7 195.2M316.7 183.2L315.1 196.2M316.7 183.2L331.4 196.2M333.7 183.2L359.1 185.2M333.7 183.2L331.4 196.2M359.1 185.2L403.1 190.9M359.1 185.2L331.4 196.2M359.1 185.2L382.7 208.5M359.1 185.2L347.3 208.8M403.1 190.9L439.7 199.2M403.1 190.9L382.7 208.5M403.1 190.9L418 212.5M439.7 199.2L418 212.5M439.7 199.2L452.3 220.5M439.7 199.2L467.1 183.2M439.7 199.2L483.7 203.6M296.7 195.2L315.1 196.2M296.7 195.2L277.3 206.5M296.7 195.2L301.3 210.5M315.1 196.2L331.4 196.2M315.1 196.2L301.3 210.5M315.1 196.2L325.7 211.5M331.4 196.2L325.7 211.5M331.4 196.2L347.3 208.8M254.4 201.2L277.3 206.5M254.4 201.2L255.7 220.5M382.7 208.5L347.3 208.8M382.7 208.5L418 212.5M382.7 208.5L363 223.1M382.7 208.5L381.3 224.8M382.7 208.5L397.3 224.1M43.1 212.2L25.5 219.5M43.1 212.2L59.8 225.5M113.1 214.8L94.1 227.2M113.1 214.8L128.1 224.8M162.1 212.2L128.1 224.8M162.1 212.2L190.5 227.2M162.1 212.2L147.5 239.5M25.5 219.5L59.8 225.5M25.5 219.5L4.8 234.8M25.5 219.5L38.1 239.8M25.5 219.5L-16.8 203.2M59.8 225.5L75.8 226.2M59.8 225.5L38.1 239.8M59.8 225.5L74.1 239.5M59.8 225.5L55.5 251.2M75.8 226.2L94.1 227.2M75.8 226.2L74.1 239.5M75.8 226.2L89.8 238.8M94.1 227.2L128.1 224.8M94.1 227.2L89.8 238.8M94.1 227.2L113.1 242.8M128.1 224.8L113.1 242.8M128.1 224.8L147.5 239.5M190.5 227.2L147.5 239.5M190.5 227.2L226.5 238.8M190.5 227.2L164.8 255.5M190.5 227.2L198.8 256.2M4.8 234.8L38.1 239.8M4.8 234.8L11.5 254.8M4.8 234.8L-16.8 203.2M4.8 234.8L-21.6 229.7M4.8 234.8L-16.7 248.7M38.1 239.8L11.5 254.8M38.1 239.8L55.5 251.2M38.1 239.8L35.5 263.2M74.1 239.5L89.8 238.8M74.1 239.5L55.5 251.2M74.1 239.5L89.8 252.8M74.1 239.5L74.8 263.2M89.8 238.8L113.1 242.8M89.8 238.8L89.8 252.8M113.1 242.8L147.5 239.5M113.1 242.8L89.8 252.8M113.1 242.8L104.8 266.5M113.1 242.8L136.5 268.2M147.5 239.5L164.8 255.5M147.5 239.5L136.5 268.2M226.5 238.8L198.8 256.2M226.5 238.8L235.8 267.2M226.5 238.8L255.7 220.5M226.5 238.8L262.3 244.8M11.5 254.8L35.5 263.2M11.5 254.8L13.1 277.2M11.5 254.8L-16.7 248.7M55.5 251.2L35.5 263.2M55.5 251.2L74.8 263.2M55.5 251.2L56.5 277.2M89.8 252.8L74.8 263.2M89.8 252.8L104.8 266.5M164.8 255.5L198.8 256.2M164.8 255.5L136.5 268.2M164.8 255.5L175.5 269.8M164.8 255.5L155.8 282.2M198.8 256.2L175.5 269.8M198.8 256.2L235.8 267.2M198.8 256.2L198.8 276.2M35.5 263.2L13.1 277.2M35.5 263.2L56.5 277.2M35.5 263.2L26.5 289.8M74.8 263.2L104.8 266.5M74.8 263.2L56.5 277.2M74.8 263.2L94.1 293.2M104.8 266.5L136.5 268.2M104.8 266.5L120.8 279.8M104.8 266.5L94.1 293.2M136.5 268.2L120.8 279.8M136.5 268.2L155.8 282.2M175.5 269.8L155.8 282.2M175.5 269.8L198.8 276.2M175.5 269.8L171.5 296.2M235.8 267.2L198.8 276.2M235.8 267.2L213.1 293.8M235.8 267.2L262.3 244.8M235.8 267.2L286.3 270.5M235.8 267.2L252.3 289.1M13.1 277.2L26.5 289.8M13.1 277.2L-39.4 279.9M13.1 277.2L-16.7 248.7M13.1 277.2L-20.2 302.3M56.5 277.2L26.5 289.8M56.5 277.2L94.1 293.2M56.5 277.2L53.1 298.8M120.8 279.8L155.8 282.2M120.8 279.8L94.1 293.2M120.8 279.8L136.5 294.5M120.8 279.8L111.5 309.8M155.8 282.2L136.5 294.5M155.8 282.2L171.5 296.2M198.8 276.2L171.5 296.2M198.8 276.2L213.1 293.8M26.5 289.8L53.1 298.8M26.5 289.8L20.8 309.8M26.5 289.8L-20.2 302.3M94.1 293.2L53.1 298.8M94.1 293.2L74.8 312.2M94.1 293.2L111.5 309.8M94.1 293.2L96.5 318.8M136.5 294.5L171.5 296.2M136.5 294.5L111.5 309.8M136.5 294.5L152.5 307.8M171.5 296.2L213.1 293.8M171.5 296.2L152.5 307.8M171.5 296.2L168.1 321.2M171.5 296.2L201.5 318.8M213.1 293.8L227.5 310.5M213.1 293.8L201.5 318.8M213.1 293.8L252.3 289.1M53.1 298.8L20.8 309.8M53.1 298.8L74.8 312.2M53.1 298.8L52.1 321.2M20.8 309.8L52.1 321.2M20.8 309.8L33.1 333.8M20.8 309.8L-20.2 302.3M20.8 309.8L-13.2 317.3M74.8 312.2L52.1 321.2M74.8 312.2L96.5 318.8M74.8 312.2L77.5 331.2M111.5 309.8L152.5 307.8M111.5 309.8L96.5 318.8M111.5 309.8L106.5 338.8M111.5 309.8L146.5 334.8M152.5 307.8L168.1 321.2M152.5 307.8L146.5 334.8M227.5 310.5L201.5 318.8M227.5 310.5L238.1 324.8M227.5 310.5L252.3 289.1M227.5 310.5L260.7 309.8M52.1 321.2L33.1 333.8M52.1 321.2L77.5 331.2M52.1 321.2L58.1 343.2M96.5 318.8L77.5 331.2M96.5 318.8L106.5 338.8M168.1 321.2L201.5 318.8M168.1 321.2L146.5 334.8M168.1 321.2L183.1 335.5M201.5 318.8L238.1 324.8M201.5 318.8L183.1 335.5M201.5 318.8L200.8 336.2M201.5 318.8L218.1 337.2M238.1 324.8L218.1 337.2M238.1 324.8L239.8 351.2M238.1 324.8L260.7 309.8M238.1 324.8L259.7 333.8M33.1 333.8L16.5 349.8M33.1 333.8L43.1 352.2M33.1 333.8L58.1 343.2M33.1 333.8L-13.2 317.3M33.1 333.8L-18.5 341M77.5 331.2L106.5 338.8M77.5 331.2L58.1 343.2M77.5 331.2L69.8 357.2M106.5 338.8L146.5 334.8M106.5 338.8L69.8 357.2M106.5 338.8L94.8 368.2M106.5 338.8L134.1 362.8M146.5 334.8L183.1 335.5M146.5 334.8L134.1 362.8M146.5 334.8L173.1 364.8M183.1 335.5L200.8 336.2M183.1 335.5L198.8 349.5M183.1 335.5L173.1 364.8M200.8 336.2L218.1 337.2M200.8 336.2L198.8 349.5M200.8 336.2L215.8 349.5M218.1 337.2L215.8 349.5M218.1 337.2L239.8 351.2M16.5 349.8L43.1 352.2M16.5 349.8L39.1 366.2M16.5 349.8L16.9 368.4M16.5 349.8L-18.5 341M16.5 349.8L-16.3 363.9M43.1 352.2L58.1 343.2M43.1 352.2L69.8 357.2M43.1 352.2L39.1 366.2M58.1 343.2L69.8 357.2M69.8 357.2L39.1 366.2M69.8 357.2L94.8 368.2M69.8 357.2L60.8 375.5M198.8 349.5L215.8 349.5M198.8 349.5L173.1 364.8M198.8 349.5L215.5 362.8M198.8 349.5L187.1 374.8M215.8 349.5L239.8 351.2M215.8 349.5L215.5 362.8M239.8 351.2L215.5 362.8M239.8 351.2L229.8 376.2M239.8 351.2L259.7 333.8M239.8 351.2L284.7 352.5M239.8 351.2L264.7 373.1M39.1 366.2L60.8 375.5M39.1 366.2L16.9 368.4M39.1 366.2L33.2 382M94.8 368.2L134.1 362.8M94.8 368.2L60.8 375.5M94.8 368.2L75.8 392.2M94.8 368.2L105.8 389.5M134.1 362.8L173.1 364.8M134.1 362.8L157.5 373.8M134.1 362.8L105.8 389.5M134.1 362.8L139.1 385.5M173.1 364.8L157.5 373.8M173.1 364.8L187.1 374.8M215.5 362.8L187.1 374.8M215.5 362.8L229.8 376.2M215.5 362.8L208.1 389.5M60.8 375.5L75.8 392.2M60.8 375.5L33.2 382M60.8 375.5L48.9 395.6M157.5 373.8L187.1 374.8M157.5 373.8L139.1 385.5M157.5 373.8L173.1 394.8M187.1 374.8L173.1 394.8M187.1 374.8L208.1 389.5M229.8 376.2L208.1 389.5M229.8 376.2L245.8 389.8M229.8 376.2L264.7 373.1M75.8 392.2L105.8 389.5M75.8 392.2L83.1 407.2M75.8 392.2L48.9 395.6M75.8 392.2L64.1 408.9M105.8 389.5L139.1 385.5M105.8 389.5L119.1 398.2M105.8 389.5L83.1 407.2M105.8 389.5L99.3 410.5M139.1 385.5L173.1 394.8M139.1 385.5L119.1 398.2M139.1 385.5L150.7 414.1M173.1 394.8L208.1 389.5M173.1 394.8L150.7 414.1M173.1 394.8L196 416.5M208.1 389.5L245.8 389.8M208.1 389.5L196 416.5M208.1 389.5L236 418.8M245.8 389.8L264.7 373.1M245.8 389.8L263.3 389.8M245.8 389.8L261.7 403.1M245.8 389.8L236 418.8M119.1 398.2L99.3 410.5M119.1 398.2L150.7 414.1M119.1 398.2L116.7 424.8M83.1 407.2L99.3 410.5M83.1 407.2L96.7 421.5M83.1 407.2L64.1 408.9M83.1 407.2L80.2 422.9M277.3 206.5L301.3 210.5M277.3 206.5L255.7 220.5M277.3 206.5L283 225.8M301.3 210.5L325.7 211.5M301.3 210.5L283 225.8M301.3 210.5L312.3 229.1M325.7 211.5L347.3 208.8M325.7 211.5L312.3 229.1M325.7 211.5L340.7 225.5M347.3 208.8L340.7 225.5M347.3 208.8L363 223.1M418 212.5L452.3 220.5M418 212.5L397.3 224.1M418 212.5L424 238.8M452.3 220.5L424 238.8M452.3 220.5L464.9 230.6M452.3 220.5L483.7 203.6M255.7 220.5L283 225.8M255.7 220.5L262.3 244.8M283 225.8L312.3 229.1M283 225.8L262.3 244.8M283 225.8L298 249.8M312.3 229.1L340.7 225.5M312.3 229.1L298 249.8M312.3 229.1L333.3 244.1M340.7 225.5L363 223.1M340.7 225.5L333.3 244.1M340.7 225.5L361.7 235.5M363 223.1L381.3 224.8M363 223.1L361.7 235.5M381.3 224.8L397.3 224.1M381.3 224.8L361.7 235.5M381.3 224.8L379 237.1M381.3 224.8L395.7 237.1M397.3 224.1L395.7 237.1M397.3 224.1L424 238.8M262.3 244.8L298 249.8M262.3 244.8L286.3 270.5M298 249.8L333.3 244.1M298 249.8L286.3 270.5M298 249.8L319 262.5M333.3 244.1L361.7 235.5M333.3 244.1L359.7 249.1M333.3 244.1L319 262.5M333.3 244.1L339.7 261.5M361.7 235.5L379 237.1M361.7 235.5L359.7 249.1M361.7 235.5L376.3 249.1M379 237.1L395.7 237.1M379 237.1L376.3 249.1M379 237.1L394 250.5M395.7 237.1L424 238.8M395.7 237.1L394 250.5M424 238.8L394 250.5M424 238.8L425.7 257.5M424 238.8L450.7 258.8M424 238.8L464.9 230.6M424 238.8L464.9 248.6M359.7 249.1L376.3 249.1M359.7 249.1L339.7 261.5M359.7 249.1L375 271.5M376.3 249.1L394 250.5M376.3 249.1L375 271.5M394 250.5L425.7 257.5M394 250.5L375 271.5M394 250.5L409.7 263.8M425.7 257.5L450.7 258.8M425.7 257.5L409.7 263.8M425.7 257.5L425.7 278.1M425.7 257.5L442.3 278.8M450.7 258.8L442.3 278.8M450.7 258.8L461.3 278.8M450.7 258.8L464.9 248.6M450.7 258.8L481.2 257.9M286.3 270.5L319 262.5M286.3 270.5L252.3 289.1M286.3 270.5L290 292.5M286.3 270.5L314.7 288.1M319 262.5L339.7 261.5M319 262.5L337.3 277.5M319 262.5L314.7 288.1M339.7 261.5L375 271.5M339.7 261.5L337.3 277.5M375 271.5L409.7 263.8M375 271.5L337.3 277.5M375 271.5L346.7 296.5M375 271.5L402.3 288.1M375 271.5L376.3 304.1M409.7 263.8L425.7 278.1M409.7 263.8L402.3 288.1M337.3 277.5L314.7 288.1M337.3 277.5L346.7 296.5M425.7 278.1L442.3 278.8M425.7 278.1L402.3 288.1M425.7 278.1L424.7 289.8M442.3 278.8L461.3 278.8M442.3 278.8L424.7 289.8M442.3 278.8L440.7 290.8M461.3 278.8L440.7 290.8M461.3 278.8L456.3 305.5M461.3 278.8L481.2 257.9M461.3 278.8L487 276.3M461.3 278.8L485.3 292.3M252.3 289.1L290 292.5M252.3 289.1L260.7 309.8M290 292.5L314.7 288.1M290 292.5L260.7 309.8M290 292.5L316.3 311.5M290 292.5L288 323.1M314.7 288.1L346.7 296.5M314.7 288.1L316.3 311.5M346.7 296.5L316.3 311.5M346.7 296.5L376.3 304.1M346.7 296.5L353.3 327.5M402.3 288.1L424.7 289.8M402.3 288.1L376.3 304.1M402.3 288.1L420.7 303.8M402.3 288.1L402.3 315.5M424.7 289.8L440.7 290.8M424.7 289.8L420.7 303.8M424.7 289.8L439 304.1M440.7 290.8L439 304.1M440.7 290.8L456.3 305.5M260.7 309.8L288 323.1M260.7 309.8L259.7 333.8M316.3 311.5L288 323.1M316.3 311.5L353.3 327.5M316.3 311.5L318.3 337.1M376.3 304.1L353.3 327.5M376.3 304.1L402.3 315.5M376.3 304.1L379 329.1M420.7 303.8L439 304.1M420.7 303.8L402.3 315.5M420.7 303.8L423 320.5M439 304.1L456.3 305.5M439 304.1L423 320.5M439 304.1L447.3 321.5M456.3 305.5L447.3 321.5M456.3 305.5L485.3 292.3M456.3 305.5L492 314.8M288 323.1L259.7 333.8M288 323.1L318.3 337.1M288 323.1L284.7 352.5M353.3 327.5L318.3 337.1M353.3 327.5L379 329.1M353.3 327.5L350.7 346.5M353.3 327.5L375.7 343.8M402.3 315.5L423 320.5M402.3 315.5L379 329.1M402.3 315.5L401.7 334.1M423 320.5L447.3 321.5M423 320.5L401.7 334.1M423 320.5L429 340.5M447.3 321.5L429 340.5M447.3 321.5L460.7 343.1M447.3 321.5L492 314.8M259.7 333.8L284.7 352.5M318.3 337.1L350.7 346.5M318.3 337.1L284.7 352.5M318.3 337.1L323.3 364.8M379 329.1L401.7 334.1M379 329.1L375.7 343.8M401.7 334.1L429 340.5M401.7 334.1L375.7 343.8M401.7 334.1L403.3 353.8M429 340.5L460.7 343.1M429 340.5L403.3 353.8M429 340.5L436.7 363.1M460.7 343.1L436.7 363.1M460.7 343.1L463.2 372.3M460.7 343.1L483.1 360M460.7 343.1L504.1 346.9M460.7 343.1L492 314.8M350.7 346.5L375.7 343.8M350.7 346.5L323.3 364.8M350.7 346.5L367.3 367.5M375.7 343.8L367.3 367.5M375.7 343.8L403.3 353.8M284.7 352.5L323.3 364.8M284.7 352.5L264.7 373.1M284.7 352.5L300.7 379.8M323.3 364.8L367.3 367.5M323.3 364.8L300.7 379.8M323.3 364.8L340 385.5M367.3 367.5L403.3 353.8M367.3 367.5L340 385.5M367.3 367.5L405.7 378.8M367.3 367.5L379.7 394.1M403.3 353.8L436.7 363.1M403.3 353.8L405.7 378.8M436.7 363.1L405.7 378.8M436.7 363.1L442.5 385.1M436.7 363.1L463.2 372.3M264.7 373.1L300.7 379.8M264.7 373.1L263.3 389.8M264.7 373.1L281.7 391.5M300.7 379.8L340 385.5M300.7 379.8L281.7 391.5M300.7 379.8L299 397.1M300.7 379.8L320.7 399.1M340 385.5L320.7 399.1M340 385.5L379.7 394.1M340 385.5L352.3 408.1M405.7 378.8L379.7 394.1M405.7 378.8L442.5 385.1M405.7 378.8L413.7 403M263.3 389.8L281.7 391.5M263.3 389.8L261.7 403.1M281.7 391.5L299 397.1M281.7 391.5L261.7 403.1M281.7 391.5L279.7 403.8M299 397.1L320.7 399.1M299 397.1L279.7 403.8M299 397.1L300 413.1M320.7 399.1L352.3 408.1M320.7 399.1L300 413.1M320.7 399.1L327.3 426.5M379.7 394.1L352.3 408.1M379.7 394.1L413.7 403M379.7 394.1L385.7 420.4M261.7 403.1L279.7 403.8M261.7 403.1L236 418.8M261.7 403.1L277.3 416.5M279.7 403.8L277.3 416.5M279.7 403.8L300 413.1M352.3 408.1L327.3 426.5M352.3 408.1L363.2 434.4M352.3 408.1L385.7 420.4M99.3 410.5L96.7 421.5M99.3 410.5L116.7 424.8M150.7 414.1L196 416.5M150.7 414.1L116.7 424.8M150.7 414.1L137.3 441.5M150.7 414.1L166.7 441.5M196 416.5L236 418.8M196 416.5L221.7 428.1M196 416.5L166.7 441.5M196 416.5L202.3 439.8M236 418.8L221.7 428.1M236 418.8L277.3 416.5M236 418.8L255.7 433.8M96.7 421.5L116.7 424.8M96.7 421.5L80.2 422.9M96.7 421.5L95.7 436.4M116.7 424.8L137.3 441.5M116.7 424.8L95.7 436.4M116.7 424.8L111.3 450.1M221.7 428.1L202.3 439.8M221.7 428.1L220 455.5M221.7 428.1L255.7 433.8M137.3 441.5L166.7 441.5M137.3 441.5L150 462.5M137.3 441.5L111.3 450.1M137.3 441.5L127 463.8M166.7 441.5L202.3 439.8M166.7 441.5L183.3 452.1M166.7 441.5L150 462.5M166.7 441.5L168.3 461.5M202.3 439.8L183.3 452.1M202.3 439.8L220 455.5M183.3 452.1L220 455.5M183.3 452.1L168.3 461.5M183.3 452.1L195.7 473.8M220 455.5L195.7 473.8M220 455.5L227.7 482.5M220 455.5L255.7 433.8M220 455.5L255.7 466.5M150 462.5L168.3 461.5M150 462.5L127 463.8M150 462.5L142.3 477.1M168.3 461.5L195.7 473.8M168.3 461.5L166.7 488.1M168.3 461.5L142.3 477.1M195.7 473.8L227.7 482.5M195.7 473.8L166.7 488.1M195.7 473.8L202.3 501.5M227.7 482.5L202.3 501.5M227.7 482.5L255.7 466.5M227.7 482.5L234.6 514.2M227.7 482.5L263 496.5M139 494.8L166.7 488.1M139 494.8L124.3 507.1M139 494.8L149 515.5M139 494.8L142.3 477.1M139 494.8L122.4 489.9M166.7 488.1L202.3 501.5M166.7 488.1L149 515.5M166.7 488.1L179.3 519.8M166.7 488.1L142.3 477.1M124.3 507.1L106 515.5M124.3 507.1L149 515.5M124.3 507.1L121.7 524.1M124.3 507.1L122.4 489.9M124.3 507.1L102.8 502.4M202.3 501.5L179.3 519.8M202.3 501.5L206.2 531.8M202.3 501.5L234.6 514.2M106 515.5L121.7 524.1M106 515.5L102.8 502.4M106 515.5L82.3 515.5M106 515.5L98 529.1M149 515.5L121.7 524.1M149 515.5L179.3 519.8M149 515.5L136 537.1M149 515.5L161.7 537.1M121.7 524.1L136 537.1M121.7 524.1L98 529.1M121.7 524.1L113.4 542.4M179.3 519.8L161.7 537.1M179.3 519.8L183.4 546M179.3 519.8L206.2 531.8M136 537.1L161.7 537.1M136 537.1L147.7 550.8M136 537.1L113.4 542.4M136 537.1L129.4 556.3M161.7 537.1L147.7 550.8M161.7 537.1L164.2 557.9M161.7 537.1L183.4 546M147.7 550.8L129.4 556.3M147.7 550.8L145 569.8M147.7 550.8L164.2 557.9M277.3 416.5L300 413.1M277.3 416.5L255.7 433.8M277.3 416.5L293 429.8M300 413.1L327.3 426.5M300 413.1L293 429.8M327.3 426.5L293 429.8M327.3 426.5L308.3 444.1M327.3 426.5L326.3 444.8M327.3 426.5L343.4 446.6M327.3 426.5L363.2 434.4M255.7 433.8L293 429.8M255.7 433.8L283.3 455.5M255.7 433.8L255.7 466.5M293 429.8L308.3 444.1M293 429.8L283.3 455.5M308.3 444.1L326.3 444.8M308.3 444.1L283.3 455.5M308.3 444.1L304.6 470.7M308.3 444.1L324.3 458.5M326.3 444.8L324.3 458.5M326.3 444.8L343.4 446.6M283.3 455.5L255.7 466.5M283.3 455.5L285.2 482.8M283.3 455.5L304.6 470.7M255.7 466.5L263 496.5M255.7 466.5L285.2 482.8M11.5 91.6L39.8 73.9M11.5 91.6L-17.4 109.5M39.8 73.9L68.1 56.3M68.1 56.3L90.5 42.3M90.5 42.3L109.7 30.4M109.7 30.4L129.1 18.3M129.1 18.3L148.7 6.1M148.7 6.1L168.5 -6.2M16.9 368.4L33.2 382M16.9 368.4L-2 380.1M16.9 368.4L-16.3 363.9M33.2 382L48.9 395.6M48.9 395.6L64.1 408.9M64.1 408.9L80.2 422.9M442.5 385.1L413.7 403M442.5 385.1L463.2 372.3M413.7 403L385.7 420.4M463.2 372.3L483.1 360M80.2 422.9L95.7 436.4M95.7 436.4L111.3 450.1M111.3 450.1L127 463.8M127 463.8L142.3 477.1M142.3 477.1L122.4 489.9M122.4 489.9L102.8 502.4M102.8 502.4L82.3 515.5M82.3 515.5L98 529.1M98 529.1L113.4 542.4M98 529.1L129.4 556.3M98 529.1L145 569.8M113.4 542.4L129.4 556.3M129.4 556.3L145 569.8M145 569.8L164.2 557.9M164.2 557.9L183.4 546M183.4 546L206.2 531.8M206.2 531.8L234.6 514.2M234.6 514.2L263 496.5M263 496.5L285.2 482.8M285.2 482.8L304.6 470.7M304.6 470.7L324.3 458.5M324.3 458.5L343.4 446.6M343.4 446.6L363.2 434.4M363.2 434.4L385.7 420.4M168.5 -6.2L188 -18.4M188 -18.4L207.5 -30.5M188 -18.4L221.6 -8.1M207.5 -30.5L227.6 -38.6M207.5 -30.5L221.6 -8.1M227.6 -38.6L221.6 -8.1M227.6 -38.6L249.8 -36.7M227.6 -38.6L246.5 -11.6M227.6 -38.6L322.1 -53.6M-17.4 109.5L-37.4 122M-17.4 109.5L-13.4 148.6M-37.4 122L-57.3 134.4M-37.4 122L-41.7 145.7M-37.4 122L-13.4 148.6M-57.3 134.4L-41.7 145.7M-57.3 134.4L-38.9 187.9M-57.3 134.4L-44.4 203.2M-57.3 134.4L-43.3 300.4M-57.3 134.4L-46.4 359.4M483.1 360L504.1 346.9M504.1 346.9L492 314.8M504.1 346.9L515.5 274.5M504.1 346.9L506.4 294.8M-2 380.1L-20 391.3M-2 380.1L-36.4 384M-2 380.1L-16.3 363.9M-20 391.3L-38.9 403M-20 391.3L-36.4 384M-38.9 403L-46.4 359.4M-38.9 403L-36.4 384M-41.7 145.7L-38.9 187.9M-41.7 145.7L-13.4 148.6M-41.7 145.7L-17.9 170.8M-38.9 187.9L-44.4 203.2M-38.9 187.9L-17.9 170.8M-38.9 187.9L-16.8 203.2M-44.4 203.2L-37.6 230.5M-44.4 203.2L-39.4 257.3M-44.4 203.2L-43.3 300.4M-44.4 203.2L-16.8 203.2M-37.6 230.5L-39.4 257.3M-37.6 230.5L-16.8 203.2M-37.6 230.5L-21.6 229.7M-37.6 230.5L-16.7 248.7M-39.4 257.3L-39.4 279.9M-39.4 257.3L-43.3 300.4M-39.4 257.3L-16.7 248.7M-39.4 279.9L-43.3 300.4M-39.4 279.9L-16.7 248.7M-39.4 279.9L-20.2 302.3M-43.3 300.4L-42.7 324M-43.3 300.4L-46.4 359.4M-43.3 300.4L-20.2 302.3M-42.7 324L-46.4 359.4M-42.7 324L-20.2 302.3M-42.7 324L-13.2 317.3M-42.7 324L-18.5 341M-46.4 359.4L-36.4 384M-46.4 359.4L-18.5 341M-46.4 359.4L-16.3 363.9M-36.4 384L-16.3 363.9M-13.4 148.6L-17.9 170.8M-17.9 170.8L-16.8 203.2M-16.8 203.2L-21.6 229.7M-21.6 229.7L-16.7 248.7M-20.2 302.3L-13.2 317.3M-13.2 317.3L-18.5 341M-18.5 341L-16.3 363.9M221.6 -8.1L246.5 -11.6M249.8 -36.7L246.5 -11.6M249.8 -36.7L275.8 -28.7M249.8 -36.7L322.1 -53.6M246.5 -11.6L275.8 -28.7M275.8 -28.7L296 -28.1M275.8 -28.7L297.8 -10M275.8 -28.7L322.1 -53.6M296 -28.1L297.8 -10M296 -28.1L322.1 -53.6M296 -28.1L315.4 -5.7M296 -28.1L343.1 -50M297.8 -10L315.4 -5.7M322.1 -53.6L343.1 -50M322.1 -53.6L364.4 -58.6M322.1 -53.6L384.8 -61.1M315.4 -5.7L343.1 -50M315.4 -5.7L366.6 -28.6M315.4 -5.7L365.2 -6.8M343.1 -50L364.4 -58.6M343.1 -50L366.6 -28.6M364.4 -58.6L366.6 -28.6M364.4 -58.6L384.8 -61.1M364.4 -58.6L389.8 -34.1M366.6 -28.6L365.2 -6.8M366.6 -28.6L389.8 -34.1M366.6 -28.6L394.7 -7.3M365.2 -6.8L394.7 -7.3M384.8 -61.1L389.8 -34.1M384.8 -61.1L411.2 -52.9M384.8 -61.1L440.8 -57M384.8 -61.1L506.3 -60.2M389.8 -34.1L394.7 -7.3M389.8 -34.1L411.2 -52.9M389.8 -34.1L410.6 -11.9M389.8 -34.1L437.7 -32.4M394.7 -7.3L410.6 -11.9M411.2 -52.9L440.8 -57M411.2 -52.9L437.7 -32.4M410.6 -11.9L437.7 -32.4M440.8 -57L437.7 -32.4M440.8 -57L464.9 -55.2M440.8 -57L464.2 -34.1M440.8 -57L506.3 -60.2M437.7 -32.4L464.2 -34.1M437.7 -32.4L465.7 -14.1M464.9 -55.2L464.2 -34.1M464.9 -55.2L482.7 -55.8M464.9 -55.2L506.3 -60.2M464.2 -34.1L465.7 -14.1M464.2 -34.1L482.7 -55.8M464.2 -34.1L489.6 -35.1M464.2 -34.1L482.8 -12.2M465.7 -14.1L482.8 -12.2M465.7 -14.1L481.2 8.6M466.2 123.5L462.7 167.7M466.2 123.5L484.1 95.2M466.2 123.5L486.8 118M466.2 123.5L489.1 144M462.7 167.7L467.1 183.2M462.7 167.7L489.1 144M462.7 167.7L487.9 167.6M467.1 183.2L487.9 167.6M467.1 183.2L486.3 185.9M467.1 183.2L483.7 203.6M464.9 230.6L464.9 248.6M464.9 230.6L483.7 203.6M464.9 230.6L489.5 230.8M464.9 248.6L489.5 230.8M464.9 248.6L481.2 257.9M482.7 -55.8L489.6 -35.1M482.7 -55.8L506.3 -60.2M489.6 -35.1L482.8 -12.2M489.6 -35.1L506.3 -60.2M489.6 -35.1L512.9 -32.8M482.8 -12.2L481.2 8.6M482.8 -12.2L512.9 -32.8M482.8 -12.2L513.2 -11.1M482.8 -12.2L511.6 5.8M481.2 8.6L486.9 33.3M481.2 8.6L511.6 5.8M486.9 33.3L487.2 52.3M486.9 33.3L511.6 5.8M486.9 33.3L512.1 32.9M487.2 52.3L480.3 71.1M487.2 52.3L512.1 32.9M487.2 52.3L515.5 48.9M487.2 52.3L504.8 78.9M480.3 71.1L484.1 95.2M480.3 71.1L504.8 78.9M484.1 95.2L486.8 118M484.1 95.2L504.8 78.9M484.1 95.2L515.1 97.9M486.8 118L489.1 144M486.8 118L515.1 97.9M486.8 118L512.5 121.5M489.1 144L487.9 167.6M489.1 144L512.5 121.5M489.1 144L508.7 142.4M489.1 144L511.2 159.1M487.9 167.6L486.3 185.9M487.9 167.6L511.2 159.1M487.9 167.6L507.7 189.7M486.3 185.9L483.7 203.6M486.3 185.9L507.7 189.7M483.7 203.6L489.5 230.8M483.7 203.6L507.7 189.7M483.7 203.6L507.1 208.5M489.5 230.8L481.2 257.9M489.5 230.8L507.1 208.5M489.5 230.8L507.1 229.1M489.5 230.8L511.8 255.7M481.2 257.9L487 276.3M481.2 257.9L511.8 255.7M487 276.3L485.3 292.3M487 276.3L511.8 255.7M487 276.3L515.5 274.5M487 276.3L506.4 294.8M485.3 292.3L492 314.8M485.3 292.3L506.4 294.8M492 314.8L506.4 294.8M506.3 -60.2L512.9 -32.8M512.9 -32.8L513.2 -11.1M512.9 -32.8L515.5 48.9M513.2 -11.1L511.6 5.8M513.2 -11.1L515.5 48.9M511.6 5.8L512.1 32.9M511.6 5.8L515.5 48.9M512.1 32.9L515.5 48.9M515.5 48.9L504.8 78.9M515.5 48.9L515.1 97.9M515.5 48.9L515.5 274.5M504.8 78.9L515.1 97.9M515.1 97.9L512.5 121.5M515.1 97.9L511.2 159.1M515.1 97.9L515.5 274.5M512.5 121.5L508.7 142.4M512.5 121.5L511.2 159.1M508.7 142.4L511.2 159.1M511.2 159.1L507.7 189.7M511.2 159.1L511.8 255.7M511.2 159.1L515.5 274.5M507.7 189.7L507.1 208.5M507.7 189.7L511.8 255.7M507.1 208.5L507.1 229.1M507.1 208.5L511.8 255.7M507.1 229.1L511.8 255.7M511.8 255.7L515.5 274.5M515.5 274.5L506.4 294.8" stroke="#080404" stroke-width="1.1" fill="none"/>
<polygon points="-82,149.8 218,-37.1 518,-85.2 518,338.3 145,569.8 82.3,515.5 142.3,477.1 17.3,368.1 -82,429.7" fill="none" stroke="#080404" stroke-width="0.9"/>
<path d="M173.4 85.1L191.7 73.5M191.7 73.5L204.4 84.8M101.4 128.8L131.1 112.5M164.4 183.8L192.4 166.8M2.1 191.5L12.4 185.1M12.4 185.1L25.4 196.8M433.4 15.9L418.4 3.5M433.4 15.9L453.1 4.5M433.4 15.9L414.4 28.9M433.4 15.9L449.1 30.2M254.4 128.2L238.4 114.5M254.4 128.2L273.7 115.9M254.4 128.2L234.4 139.5M254.4 128.2L269.7 141.9M316.7 183.2L300.4 168.5M316.7 183.2L335.7 170.9M316.7 183.2L296.7 195.2M316.7 183.2L331.4 196.2M282.1 16.2L309.4 1.9M345.4 71.9L371.4 54.2M17.1 368.8L43.1 352.2M75.8 239.5L92.5 228.8M198.8 349.5L218.1 337.2M290 292.5L339.7 261.5M353.3 346.5L379 330.5M379 237.1L363 223.1M379 237.1L397.3 224.1M379 237.1L359.7 249.1M379 237.1L394 250.5M425.7 278.8L441.3 291.5M441.3 291.5L424 303.8M261.7 403.1L281.7 391.5M214 338.1L219 335.8M80 423.1L99.3 410.5M142.3 477.1L168.3 461.5" stroke="#1c720c" stroke-width="1.2" fill="none"/>
<path d="M99.3 410.5L119.3 397.5" stroke="#e018d0" stroke-width="1.4" fill="none"/>
<path d="M0 442.6L82.5 514.8" stroke="#2c6a18" stroke-width="1" fill="none"/>
<path d="M316.7 104.5L316.7 183.2" stroke="#2e7e1e" stroke-width="1.3" fill="none"/>
<circle cx="316.7" cy="104.5" r="3.3" fill="#3cc83e"/>
<ellipse cx="316.7" cy="143.5" rx="1.9" ry="2.2" fill="#fff" fill-opacity="0.35" stroke="#7a0a86" stroke-width="0.9"/>
<path d="M136.8 215.4L136.8 294.5" stroke="#2e7e1e" stroke-width="1.3" fill="none"/>
<circle cx="136.8" cy="215.4" r="3.3" fill="#3cc83e"/>
<ellipse cx="136.8" cy="255.8" rx="1.9" ry="2.2" fill="#fff" fill-opacity="0.35" stroke="#7a0a86" stroke-width="0.9"/>
<path d="M324.3 380.1L324.3 537.3" stroke="#2e7e1e" stroke-width="1.3" fill="none"/>
<circle cx="324.3" cy="380.1" r="3.3" fill="#3cc83e"/>
<ellipse cx="324.3" cy="418.6" rx="1.9" ry="2.2" fill="#fff" fill-opacity="0.35" stroke="#7a0a86" stroke-width="0.9"/>
<ellipse cx="324.3" cy="497.4" rx="1.9" ry="2.2" fill="#fff" fill-opacity="0.35" stroke="#7a0a86" stroke-width="0.9"/>
<path d="M145 490.6L145 614.8" stroke="#2e7e1e" stroke-width="1.3" fill="none"/>
<circle cx="145" cy="490.6" r="3.3" fill="#3cc83e"/>
<ellipse cx="145" cy="529.8" rx="1.9" ry="2.2" fill="#fff" fill-opacity="0.35" stroke="#7a0a86" stroke-width="0.9"/>
<path d="M129.1 -5.2L129.1 17.3" stroke="#2e8a1e" stroke-width="1.3" fill="none"/>
<circle cx="20.7" cy="459.6" r="2" fill="none" stroke="#7a0a86" stroke-width="0.9"/>
<path d="M324.3 537L309.5 523.6" stroke="#0c6c0c" stroke-width="2.4"/>
<path d="M324.3 537L341.8 525.7" stroke="#0808f8" stroke-width="2.4"/>
<path d="M324.3 537L324.3 520.9" stroke="#fa0808" stroke-width="2.4"/>
<circle cx="324.1" cy="537.1" r="3.2" fill="#3cc83e"/>
<defs><linearGradient id="gz" x1="0" x2="1" y1="0" y2="0"><stop offset="0" stop-color="#5a0000"/><stop offset="0.45" stop-color="#b01010"/><stop offset="1" stop-color="#600000"/></linearGradient></defs>
<path d="M63.7 541.4L41.8 521.6" stroke="#0a8a0a" stroke-width="4" stroke-linecap="butt"/>
<path d="M64 540.4L42.2 520.8" stroke="#18e018" stroke-width="2" stroke-linecap="butt"/>
<path d="M39.2 519.4L44.8 519.2L45 522.3L41.5 525.1Z" fill="#12c812"/>
<path d="M63.7 541.4L89.5 525.3" stroke="#0a0ae6" stroke-width="4" stroke-linecap="butt"/>
<path d="M93.5 523.1L87.5 521.8L90.8 529Z" fill="#0a0ae6"/>
<rect x="61.7" y="519.3" width="4" height="22.9" fill="url(#gz)"/>
<circle cx="63.7" cy="518.4" r="3.5" fill="#8e0808"/>
<circle cx="62.9" cy="517.4" r="1.2" fill="#d04040"/>
<text transform="translate(63.7 511.2) scale(0.62 1)" font-family="Liberation Sans, sans-serif" font-size="15.5" fill="#f01818" text-anchor="middle">Z</text>
<text transform="translate(34.9 515.2) scale(0.64 1)" font-family="Liberation Sans, sans-serif" font-size="14.2" fill="#18e018" text-anchor="middle">Y</text>
<text transform="translate(97.8 519.6) scale(0.66 1)" font-family="Liberation Sans, sans-serif" font-size="14.2" fill="#1818f0" text-anchor="middle">X</text>
<text x="3" y="598.5" font-family="Liberation Sans, sans-serif" font-size="13" letter-spacing="0.85" fill="#101010">Solver Model used for Footfall Analysis</text>
<rect x="0" y="0" width="1" height="603" fill="#fbfbfd"/>
</svg>
</body></html>
